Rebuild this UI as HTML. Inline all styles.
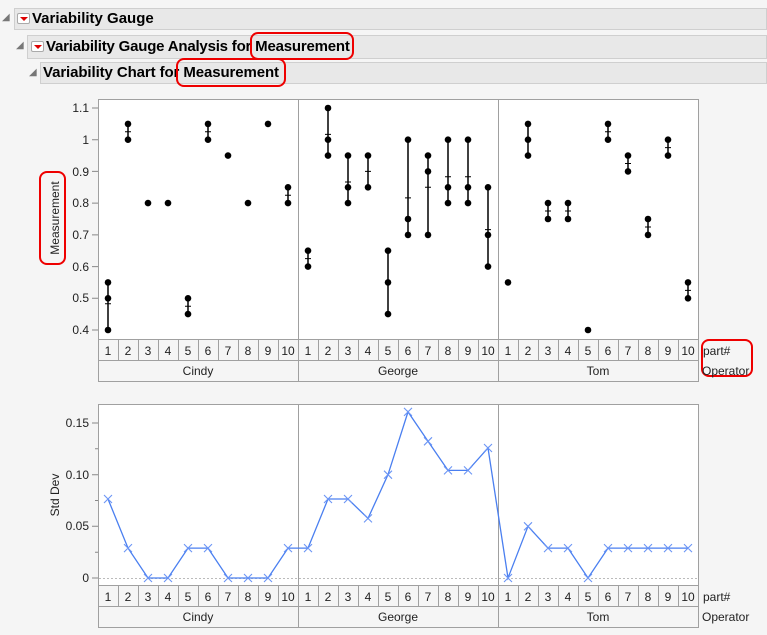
<!DOCTYPE html>
<html><head><meta charset="utf-8"><style>
body{margin:0;width:767px;height:635px;background:#f5f5f5;font-family:"Liberation Sans",sans-serif;overflow:hidden;position:relative}
.h{position:absolute;background:#e8e8e8;border:1px solid #cfcfcf;font-weight:bold;font-size:15px;color:#000;box-sizing:border-box;line-height:20px;padding-left:4px}
.tri{position:absolute;font-size:10px;color:#777}
.rb{position:absolute;width:13px;height:11px;background:#fff;border:1px solid #aaa;border-radius:2px;box-sizing:border-box}
.rb:after{content:"";position:absolute;left:2px;top:3px;border-left:4px solid transparent;border-right:4px solid transparent;border-top:4px solid #d00}
.red{position:absolute;border:2px solid #e00;border-radius:8px;box-sizing:border-box}
svg text{font-family:"Liberation Sans",sans-serif}
</style></head><body>
<div class="tri" style="left:2px;top:12px">◢</div>
<div class="h" style="left:14px;top:8px;width:753px;height:22px;padding-left:17px">Variability Gauge</div>
<div class="rb" style="left:17px;top:13px"></div>
<div class="tri" style="left:16px;top:40px">◢</div>
<div class="h" style="left:27px;top:35px;width:740px;height:24px;padding-left:18px;line-height:22px;letter-spacing:-0.2px">Variability Gauge Analysis for Measurement</div>
<div class="rb" style="left:31px;top:41px"></div>
<div class="tri" style="left:29px;top:67px">◢</div>
<div class="h" style="left:40px;top:62px;width:727px;height:22px;padding-left:2px;letter-spacing:-0.1px">Variability Chart for Measurement</div>
<div class="red" style="left:250px;top:32px;width:104px;height:28px"></div>
<div class="red" style="left:176px;top:58px;width:110px;height:29px"></div>
<div class="red" style="left:39px;top:171px;width:27px;height:94px"></div>
<div class="red" style="left:701px;top:339px;width:52px;height:38px"></div>

<svg width="767" height="635" style="position:absolute;left:0;top:0">
<g fill="#fff" stroke="#a0a0a0">
<rect x="98.5" y="99.5" width="600" height="240"/>
<rect x="98.5" y="404.5" width="600" height="181"/>
</g>
<g stroke="#a0a0a0" fill="#f5f5f5">
<rect x="98.5" y="339.5" width="600" height="42"/>
<rect x="98.5" y="585.5" width="600" height="42"/>
</g>
<g stroke="#a0a0a0">
<line x1="298.5" y1="99" x2="298.5" y2="382"/><line x1="498.5" y1="99" x2="498.5" y2="382"/>
<line x1="298.5" y1="404" x2="298.5" y2="628"/><line x1="498.5" y1="404" x2="498.5" y2="628"/>
<line x1="98" y1="360.5" x2="699" y2="360.5"/><line x1="98" y1="606.5" x2="699" y2="606.5"/>
</g>
<g stroke="#a0a0a0" id="cells">
<path d="M118.5 339v21M138.5 339v21M158.5 339v21M178.5 339v21M198.5 339v21M218.5 339v21M238.5 339v21M258.5 339v21M278.5 339v21M318.5 339v21M338.5 339v21M358.5 339v21M378.5 339v21M398.5 339v21M418.5 339v21M438.5 339v21M458.5 339v21M478.5 339v21M518.5 339v21M538.5 339v21M558.5 339v21M578.5 339v21M598.5 339v21M618.5 339v21M638.5 339v21M658.5 339v21M678.5 339v21"/>
<path transform="translate(0,246)" d="M118.5 339v21M138.5 339v21M158.5 339v21M178.5 339v21M198.5 339v21M218.5 339v21M238.5 339v21M258.5 339v21M278.5 339v21M318.5 339v21M338.5 339v21M358.5 339v21M378.5 339v21M398.5 339v21M418.5 339v21M438.5 339v21M458.5 339v21M478.5 339v21M518.5 339v21M538.5 339v21M558.5 339v21M578.5 339v21M598.5 339v21M618.5 339v21M638.5 339v21M658.5 339v21M678.5 339v21"/>
</g>
<g font-size="12" fill="#222" text-anchor="middle">
<text y="355"><tspan x="108">1</tspan><tspan x="128">2</tspan><tspan x="148">3</tspan><tspan x="168">4</tspan><tspan x="188">5</tspan><tspan x="208">6</tspan><tspan x="228">7</tspan><tspan x="248">8</tspan><tspan x="268">9</tspan><tspan x="288">10</tspan><tspan x="308">1</tspan><tspan x="328">2</tspan><tspan x="348">3</tspan><tspan x="368">4</tspan><tspan x="388">5</tspan><tspan x="408">6</tspan><tspan x="428">7</tspan><tspan x="448">8</tspan><tspan x="468">9</tspan><tspan x="488">10</tspan><tspan x="508">1</tspan><tspan x="528">2</tspan><tspan x="548">3</tspan><tspan x="568">4</tspan><tspan x="588">5</tspan><tspan x="608">6</tspan><tspan x="628">7</tspan><tspan x="648">8</tspan><tspan x="668">9</tspan><tspan x="688">10</tspan></text>
<text y="601"><tspan x="108">1</tspan><tspan x="128">2</tspan><tspan x="148">3</tspan><tspan x="168">4</tspan><tspan x="188">5</tspan><tspan x="208">6</tspan><tspan x="228">7</tspan><tspan x="248">8</tspan><tspan x="268">9</tspan><tspan x="288">10</tspan><tspan x="308">1</tspan><tspan x="328">2</tspan><tspan x="348">3</tspan><tspan x="368">4</tspan><tspan x="388">5</tspan><tspan x="408">6</tspan><tspan x="428">7</tspan><tspan x="448">8</tspan><tspan x="468">9</tspan><tspan x="488">10</tspan><tspan x="508">1</tspan><tspan x="528">2</tspan><tspan x="548">3</tspan><tspan x="568">4</tspan><tspan x="588">5</tspan><tspan x="608">6</tspan><tspan x="628">7</tspan><tspan x="648">8</tspan><tspan x="668">9</tspan><tspan x="688">10</tspan></text>
<text x="198" y="375">Cindy</text><text x="398" y="375">George</text><text x="598" y="375">Tom</text>
<text x="198" y="621">Cindy</text><text x="398" y="621">George</text><text x="598" y="621">Tom</text>
</g>
<g font-size="12" fill="#222">
<text x="703" y="355">part#</text><text x="702" y="375">Operator</text>
<text x="703" y="601">part#</text><text x="702" y="621">Operator</text>
</g>
<g font-size="12" fill="#222" text-anchor="end">
<text x="89" y="112">1.1</text><text x="89" y="144">1</text><text x="89" y="176">0.9</text><text x="89" y="207">0.8</text><text x="89" y="239">0.7</text><text x="89" y="271">0.6</text><text x="89" y="302">0.5</text><text x="89" y="334">0.4</text>
<text x="89" y="427">0.15</text><text x="89" y="479">0.10</text><text x="89" y="530">0.05</text><text x="89" y="582">0</text>
</g>
<g stroke="#888">
<path d="M92 108h6M92 139.7h6M92 171.4h6M92 203.1h6M92 234.9h6M92 266.6h6M92 298.3h6M92 330h6"/>
<path d="M92 423h6M92 474.7h6M92 526.3h6M92 578h6M95 448.8h3M95 500.5h3M95 552.2h3"/>
</g>
<text transform="translate(59,218) rotate(-90)" font-size="12" fill="#222" text-anchor="middle">Measurement</text>
<text transform="translate(59,495) rotate(-90)" font-size="12" fill="#222" text-anchor="middle">Std Dev</text>
<line x1="99" y1="578.5" x2="698" y2="578.5" stroke="#bbb" stroke-dasharray="2,2"/>
<g stroke="#000" stroke-width="1.5">
<path d="M108 282.4V330M128 123.9V139.7M188 298.3V314.1M208 123.9V139.7M288 187.3V203.1M308 250.7V266.6M328 108V155.6M348 155.6V203.1M368 155.6V187.3M388 250.7V314.1M408 139.7V234.9M428 155.6V234.9M448 139.7V203.1M468 139.7V203.1M488 187.3V266.6M528 123.9V155.6M548 203.1V219M568 203.1V219M608 123.9V139.7M628 155.6V171.4M648 219V234.9M668 139.7V155.6M688 282.4V298.3"/>
<path stroke-width="1" d="M105 303.7h6M125 131.8h6M185 306.2h6M205 131.8h6M285 195.2h6M305 258.6h6M325 134.4h6M345 182h6M365 171.4h6M385 282.4h6M405 197.9h6M425 187.3h6M445 176.7h6M465 176.7h6M485 229.6h6M525 139.7h6M545 211h6M565 211h6M605 131.8h6M625 163.5h6M645 227h6M665 147.6h6M685 290.4h6"/>
</g>
<g fill="#000">
<circle cx="108" cy="330" r="3.3"/><circle cx="108" cy="298.3" r="3.3"/><circle cx="108" cy="282.4" r="3.3"/>
<circle cx="128" cy="139.7" r="3.3"/><circle cx="128" cy="123.9" r="3.3"/>
<circle cx="148" cy="203.1" r="3.3"/><circle cx="168" cy="203.1" r="3.3"/>
<circle cx="188" cy="314.1" r="3.3"/><circle cx="188" cy="298.3" r="3.3"/>
<circle cx="208" cy="139.7" r="3.3"/><circle cx="208" cy="123.9" r="3.3"/>
<circle cx="228" cy="155.6" r="3.3"/><circle cx="248" cy="203.1" r="3.3"/><circle cx="268" cy="123.9" r="3.3"/>
<circle cx="288" cy="203.1" r="3.3"/><circle cx="288" cy="187.3" r="3.3"/>
<circle cx="308" cy="266.6" r="3.3"/><circle cx="308" cy="250.7" r="3.3"/>
<circle cx="328" cy="155.6" r="3.3"/><circle cx="328" cy="139.7" r="3.3"/><circle cx="328" cy="108" r="3.3"/>
<circle cx="348" cy="203.1" r="3.3"/><circle cx="348" cy="187.3" r="3.3"/><circle cx="348" cy="155.6" r="3.3"/>
<circle cx="368" cy="187.3" r="3.3"/><circle cx="368" cy="155.6" r="3.3"/>
<circle cx="388" cy="314.1" r="3.3"/><circle cx="388" cy="282.4" r="3.3"/><circle cx="388" cy="250.7" r="3.3"/>
<circle cx="408" cy="234.9" r="3.3"/><circle cx="408" cy="219" r="3.3"/><circle cx="408" cy="139.7" r="3.3"/>
<circle cx="428" cy="234.9" r="3.3"/><circle cx="428" cy="171.4" r="3.3"/><circle cx="428" cy="155.6" r="3.3"/>
<circle cx="448" cy="203.1" r="3.3"/><circle cx="448" cy="187.3" r="3.3"/><circle cx="448" cy="139.7" r="3.3"/>
<circle cx="468" cy="203.1" r="3.3"/><circle cx="468" cy="187.3" r="3.3"/><circle cx="468" cy="139.7" r="3.3"/>
<circle cx="488" cy="266.6" r="3.3"/><circle cx="488" cy="234.9" r="3.3"/><circle cx="488" cy="187.3" r="3.3"/>
<circle cx="508" cy="282.4" r="3.3"/>
<circle cx="528" cy="155.6" r="3.3"/><circle cx="528" cy="139.7" r="3.3"/><circle cx="528" cy="123.9" r="3.3"/>
<circle cx="548" cy="219" r="3.3"/><circle cx="548" cy="203.1" r="3.3"/>
<circle cx="568" cy="219" r="3.3"/><circle cx="568" cy="203.1" r="3.3"/>
<circle cx="588" cy="330" r="3.3"/>
<circle cx="608" cy="139.7" r="3.3"/><circle cx="608" cy="123.9" r="3.3"/>
<circle cx="628" cy="171.4" r="3.3"/><circle cx="628" cy="155.6" r="3.3"/>
<circle cx="648" cy="234.9" r="3.3"/><circle cx="648" cy="219" r="3.3"/>
<circle cx="668" cy="155.6" r="3.3"/><circle cx="668" cy="139.7" r="3.3"/>
<circle cx="688" cy="298.3" r="3.3"/><circle cx="688" cy="282.4" r="3.3"/>
</g>
<polyline fill="none" stroke="#4a7ff0" stroke-width="1.3" points="108,499 128,548.1 148,578 168,578 188,548.1 208,548.1 228,578 248,578 268,578 288,548.1 308,548.1 328,499 348,499 368,518.4 388,474.7 408,411.9 428,441.3 448,470.4 468,470.4 488,448 508,578 528,526.3 548,548.1 568,548.1 588,578 608,548.1 628,548.1 648,548.1 668,548.1 688,548.1"/>
<g stroke="#6b95f5" stroke-width="1.1" fill="none">
<path d="M104 495l8 8m0-8l-8 8 M124 544.1l8 8m0-8l-8 8 M144 574l8 8m0-8l-8 8 M164 574l8 8m0-8l-8 8 M184 544.1l8 8m0-8l-8 8 M204 544.1l8 8m0-8l-8 8 M224 574l8 8m0-8l-8 8 M244 574l8 8m0-8l-8 8 M264 574l8 8m0-8l-8 8 M284 544.1l8 8m0-8l-8 8 M304 544.1l8 8m0-8l-8 8 M324 495l8 8m0-8l-8 8 M344 495l8 8m0-8l-8 8 M364 514.4l8 8m0-8l-8 8 M384 470.7l8 8m0-8l-8 8 M404 407.9l8 8m0-8l-8 8 M424 437.3l8 8m0-8l-8 8 M444 466.4l8 8m0-8l-8 8 M464 466.4l8 8m0-8l-8 8 M484 444l8 8m0-8l-8 8 M504 574l8 8m0-8l-8 8 M524 522.3l8 8m0-8l-8 8 M544 544.1l8 8m0-8l-8 8 M564 544.1l8 8m0-8l-8 8 M584 574l8 8m0-8l-8 8 M604 544.1l8 8m0-8l-8 8 M624 544.1l8 8m0-8l-8 8 M644 544.1l8 8m0-8l-8 8 M664 544.1l8 8m0-8l-8 8 M684 544.1l8 8m0-8l-8 8"/>
</g>
</svg>
</body></html>
